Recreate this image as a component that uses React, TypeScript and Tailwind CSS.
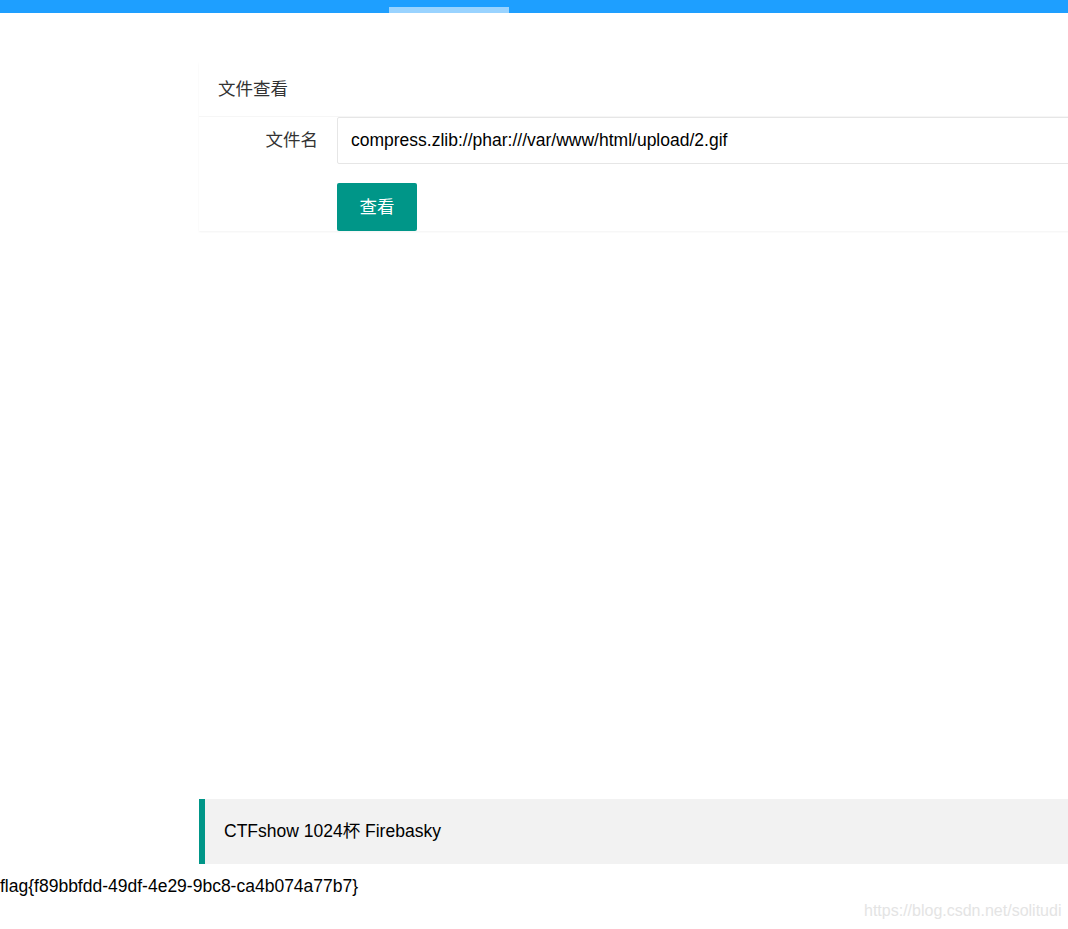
import React from "react";

export default function App() {
  return (
    <div
      className="relative w-[1068px] h-[929px] overflow-hidden bg-white text-[#333]"
      style={{ fontFamily: '"Liberation Sans", "Noto Sans CJK SC", sans-serif' }}
    >
      {/* top nav bar */}
      <div className="h-[13px] bg-[#1E9FFF] flex items-end">
        <div className="ml-[389px] w-[120px] h-[6px] bg-[#99d3ff]" />
      </div>

      {/* card */}
      <div className="ml-[199px] mt-[49px] w-[1000px] bg-white shadow-[0_1px_2px_0_rgba(0,0,0,0.05)]">
        <div className="h-[55px] flex items-center px-[19px] border-b border-[#f6f6f6] text-[17.5px] text-[#333]">
          文件查看
        </div>
        <div className="flex h-[47px]">
          <div className="w-[138px] shrink-0 flex items-center justify-end pr-[19px] text-[17.5px] text-[#333]">
            文件名
          </div>
          <div className="flex-1 border border-[#e6e6e6] rounded-[2px] flex items-center pl-[13px] text-[17.5px] text-black">
            compress.zlib://phar:///var/www/html/upload/2.gif
          </div>
        </div>
        <div className="flex pt-[19px]">
          <div className="ml-[138px] w-[80px] h-[48px] bg-[#009688] rounded-[2px] flex items-center justify-center text-white text-[17.5px]">
            查看
          </div>
        </div>
      </div>

      {/* quote */}
      <div className="ml-[199px] mt-[568px] w-[1000px] h-[65px] bg-[#f2f2f2] border-l-[6px] border-[#009688] flex items-center pl-[19px] text-[17.5px] text-black">
        CTFshow 1024杯 Firebasky
      </div>

      {/* flag */}
      <div className="mt-[11px] text-[17.5px] leading-[22px] text-black">
        flag{"{"}f89bbfdd-49df-4e29-9bc8-ca4b074a77b7{"}"}
      </div>

      {/* watermark */}
      <div className="absolute left-[864px] top-[900px] text-[16px] leading-[22px] text-[#e4e4e4]">
        https://blog.csdn.net/solitudi
      </div>
    </div>
  );
}
